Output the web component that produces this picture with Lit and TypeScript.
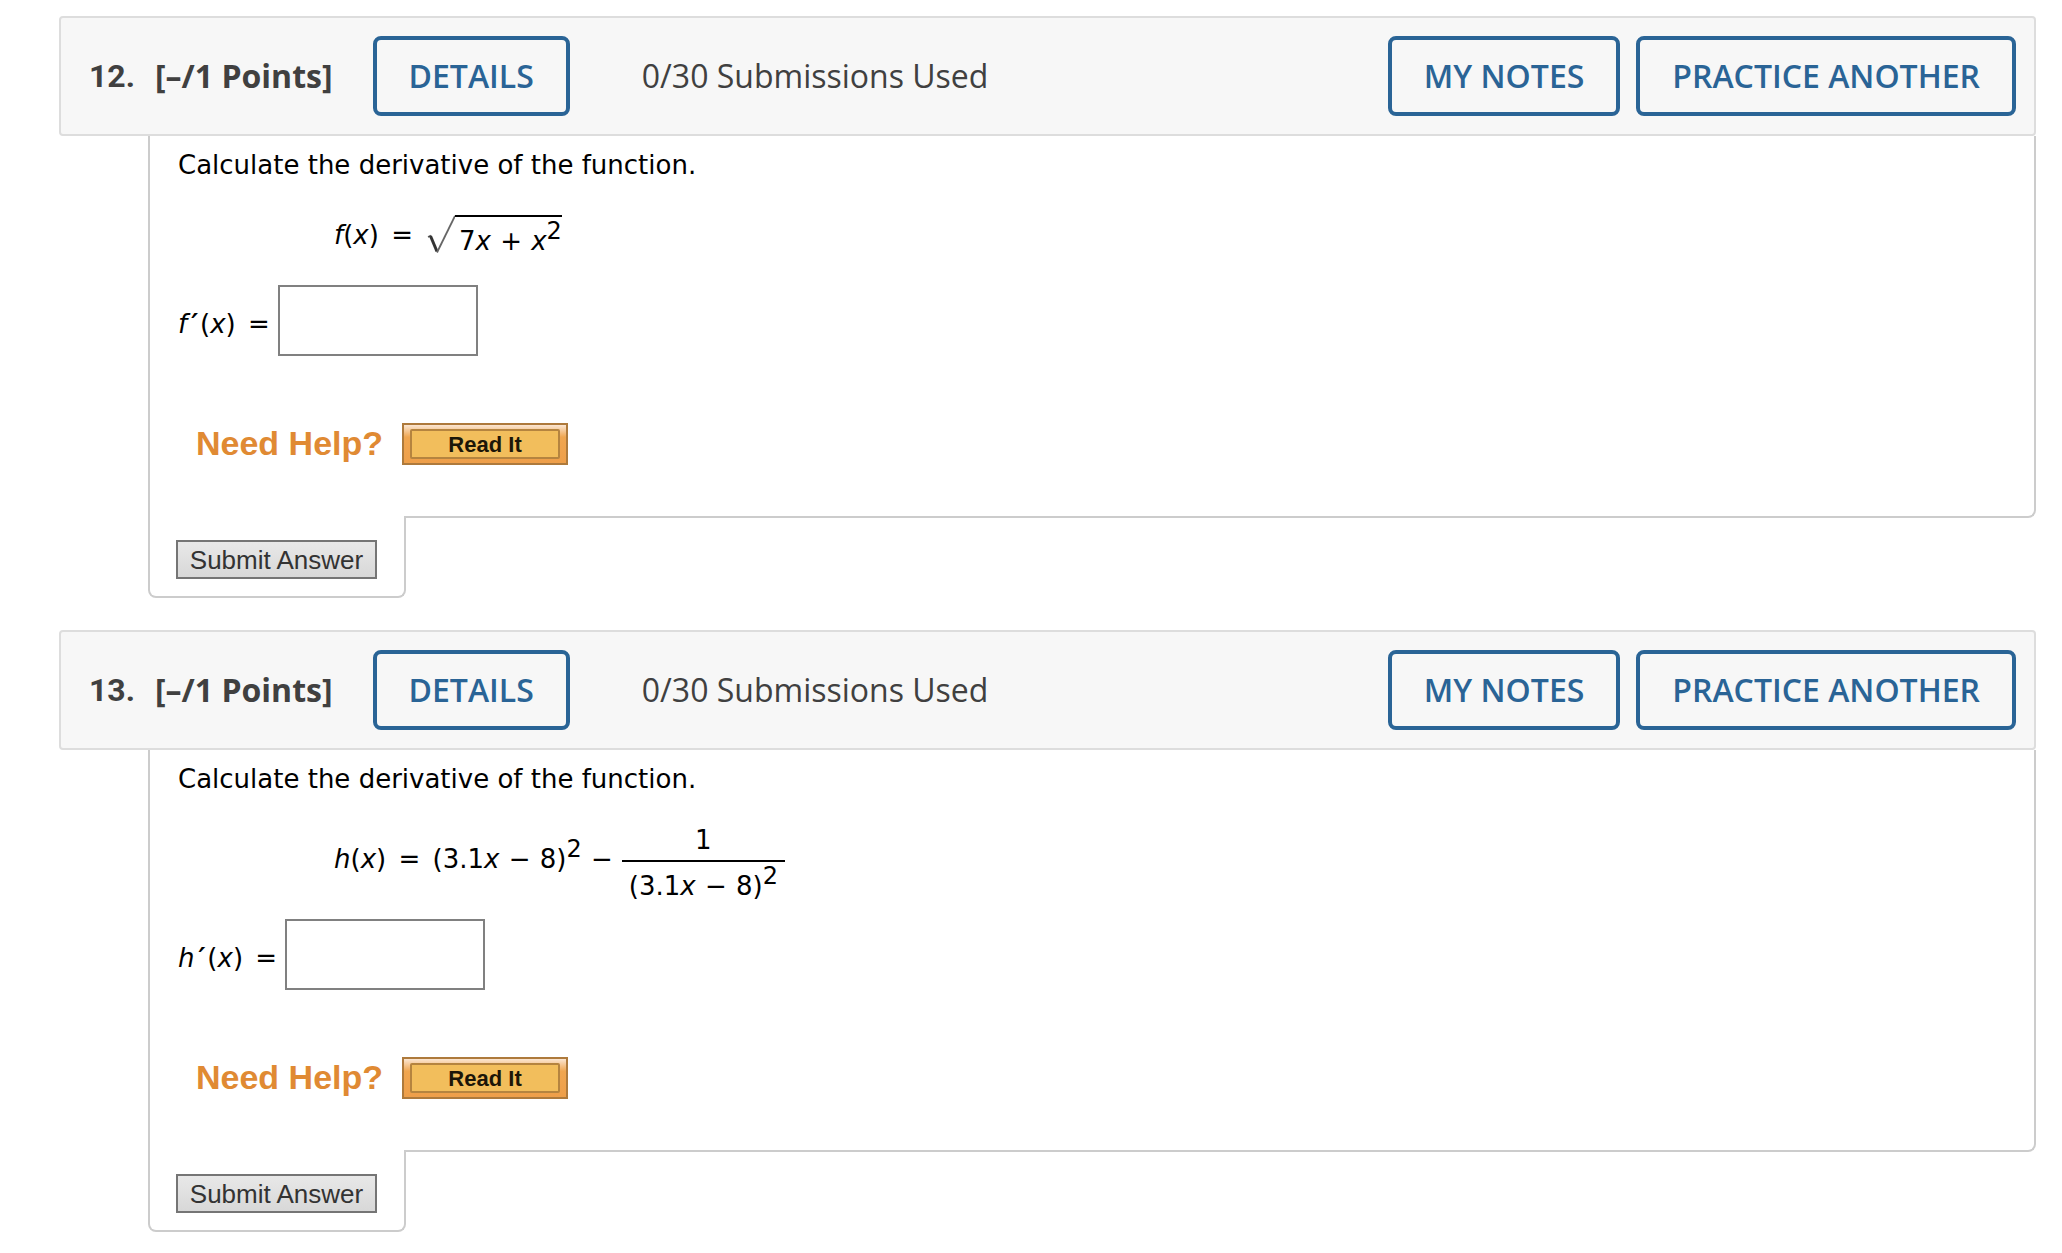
import { LitElement, html, css, TemplateResult } from "lit";
import { customElement, property } from "lit/decorators.js";

const x = html`<i>x</i>`;
const eq = html`<span class="rel">=</span>`;
const plus = html`<span class="op">+</span>`;
const minus = html`<span class="op">−</span>`;
const squared = html`<sup>2</sup>`;

@customElement("wa-question")
export class WaQuestion extends LitElement {
  @property({ type: Number }) number = 0;
  @property({ attribute: false }) formula: TemplateResult = html``;
  @property() fn = "f";

  static styles = css`
    :host { display: block; }
    * { box-sizing: border-box; }
    .head {
      display: flex; align-items: center; height: 120px; padding: 0 18px 0 28px;
      border: 2px solid #ddd; border-radius: 4px; background: #f7f7f7;
      font-family: "Open Sans", "Noto Sans", sans-serif; font-size: 32px; line-height: 44px; color: #404040;
    }
    .title { display: flex; margin: 0; font-size: inherit; font-weight: 700; gap: 20px; }
    .num { font-family: Roboto, Arial, sans-serif; }
    .btn {
      height: 80px; padding: 0 32px; border: 4px solid #2a6496; border-radius: 8px; background: transparent;
      font: 600 32px/44px "Open Sans", "Noto Sans", sans-serif; color: #2a6496; white-space: nowrap;
    }
    .details { margin-left: 40px; }
    .used { margin-left: 72px; }
    .actions { display: flex; gap: 16px; margin-left: auto; }
    .body {
      margin-left: 89px; padding: 11px 28px 0;
      border: 2px solid #ccc; border-top: 0; border-radius: 0 0 8px 0;
      font-family: "DejaVu Sans", Verdana, sans-serif; font-size: 26px; line-height: 36px; color: #000;
    }
    p { margin: 0; }
    .formula { display: flex; align-items: center; margin: 20px 0 0 156px; white-space: nowrap; }
    sup { font-size: 24px; line-height: 0; vertical-align: 11px; }
    .rel { margin: 0 4px; }
    .op { margin: 0 1px; }
    .root { display: flex; margin-left: 8px; padding: 12px 0 11px; }
    .radicand { border-top: 2px solid #000; padding: 9px 0 0 4px; line-height: 30px; }
    .frac { display: flex; flex-direction: column; margin-left: 8px; text-align: center; line-height: 30px; }
    .numer { padding: 8px 0 5px; }
    .denom { border-top: 2px solid #000; padding: 9px 7px 0; }
    .answer { display: flex; align-items: flex-end; margin-top: 18px; gap: 4px; }
    .answer label { padding-bottom: 14px; }
    .prime { margin: 0 2px 0 4px; font-weight: 700; }
    .answer input {
      width: 200px; height: 71px; padding: 0 8px; border: 2px solid #808080; border-radius: 0;
      background: #fff; font: inherit;
    }
    .help {
      display: flex; align-items: center; margin: 67px 0 51px 18px; gap: 19px;
      font-family: "Liberation Sans", Arial, sans-serif; font-weight: 700;
    }
    .need { padding-bottom: 2px; font-size: 34px; color: #e08a33; }
    .read {
      width: 166px; height: 42px; padding: 4px 6px; border: 2px solid #ae7a3c;
      background: linear-gradient(#fbe6d2, #f0a650 32%, #ee9f4a);
    }
    .read span {
      display: block; height: 30px; border: 2px solid #b5843f; border-radius: 2px; background: #f2be5c;
      font: 700 22px/28px "Liberation Sans", Arial, sans-serif; color: #1c1608;
    }
    .tab {
      position: relative; width: 258px; height: 82px; margin: -2px 0 0 89px; padding: 24px 26px 0;
      border: 2px solid #ccc; border-top: 0; border-radius: 0 0 8px 8px; background: #fff;
    }
    .submit {
      display: block; width: 201px; height: 39px; padding: 0; border: 2px solid #757575;
      background: linear-gradient(#e8e8e8, #d8d8d8);
      font: 26px/32px "Liberation Sans", Arial, sans-serif; color: #333; white-space: nowrap;
    }
  `;

  render() {
    return html`
      <section>
        <header class="head">
          <h2 class="title"><span class="num">${this.number}.</span><span>[–/1 Points]</span></h2>
          <button class="btn details" type="button">DETAILS</button>
          <span class="used">0/30 Submissions Used</span>
          <div class="actions">
            <button class="btn" type="button">MY NOTES</button>
            <button class="btn" type="button">PRACTICE ANOTHER</button>
          </div>
        </header>
        <div class="body">
          <p>Calculate the derivative of the function.</p>
          <div class="formula">${this.formula}</div>
          <div class="answer">
            <label for="answer"><i>${this.fn}</i><i class="prime">′</i>(${x}) ${eq}</label>
            <input id="answer" type="text" autocomplete="off" />
          </div>
          <div class="help">
            <span class="need">Need Help?</span>
            <button class="read" type="button"><span>Read It</span></button>
          </div>
        </div>
        <div class="tab"><button class="submit" type="button">Submit Answer</button></div>
      </section>
    `;
  }
}

const rootFormula = html`
  <span><i>f</i>(${x}) ${eq}</span>
  <span class="root">
    <svg width="30" height="40" viewBox="0 0 30 40" fill="none" aria-hidden="true">
      <path d="M3 22 L6 20.5" stroke="#555" stroke-width="1.5" />
      <path d="M5.5 21 L12 36.5" stroke="#333" stroke-width="3" />
      <path d="M12 37.5 L30 1" stroke="#666" stroke-width="1.8" />
    </svg>
    <span class="radicand">7${x} ${plus} ${x}${squared}</span>
  </span>
`;

const fractionFormula = html`
  <span><i>h</i>(${x}) ${eq} (3.1${x} ${minus} 8)${squared} ${minus}</span>
  <span class="frac">
    <span class="numer">1</span>
    <span class="denom">(3.1${x} ${minus} 8)${squared}</span>
  </span>
`;

@customElement("app-root")
export class AppRoot extends LitElement {
  static styles = css`
    :host { display: flex; flex-direction: column; gap: 32px; padding: 16px 26px 20px 59px; background: #fff; }
  `;

  render() {
    return html`
      <wa-question .number=${12} .fn=${"f"} .formula=${rootFormula}></wa-question>
      <wa-question .number=${13} .fn=${"h"} .formula=${fractionFormula}></wa-question>
    `;
  }
}
